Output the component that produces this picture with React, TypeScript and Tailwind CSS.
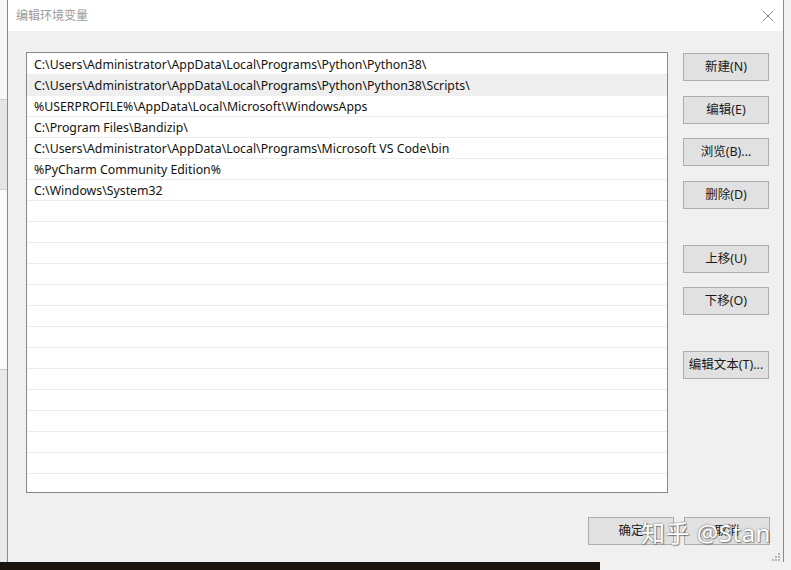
import React from "react"

const paths = [
  "C:\\Users\\Administrator\\AppData\\Local\\Programs\\Python\\Python38\\",
  "C:\\Users\\Administrator\\AppData\\Local\\Programs\\Python\\Python38\\Scripts\\",
  "%USERPROFILE%\\AppData\\Local\\Microsoft\\WindowsApps",
  "C:\\Program Files\\Bandizip\\",
  "C:\\Users\\Administrator\\AppData\\Local\\Programs\\Microsoft VS Code\\bin",
  "%PyCharm Community Edition%",
  "C:\\Windows\\System32",
]

const rows = [...paths, ...Array(14).fill("")]

const font = { fontFamily: "'Noto Sans', 'Noto Sans CJK SC', sans-serif" }

function Btn({ label, className = "" }: { label: string; className?: string }) {
  return (
    <button
      className={`h-[28px] w-[86px] shrink-0 border border-[#adadad] bg-[#e1e1e1] text-[12.5px] text-[#1a1a1a] leading-none ${className}`}
    >
      {label}
    </button>
  )
}

export default function App() {
  return (
    <div className="relative w-[791px] h-[570px] overflow-hidden bg-[#f4f4f4]" style={font}>
      <div className="flex h-[562px]">
        {/* fenêtre derrière, à gauche */}
        <div className="w-[7px] shrink-0 flex flex-col">
          <div className="h-[100px] bg-[#f7f7f7] border-b border-[#cfcfcf]" />
          <div className="h-[90px] bg-[#e6e6e6] border-b border-[#d0d0d0]" />
          <div className="h-[180px] bg-[#fafafa] border-b border-[#c8c8c8]" />
          <div className="flex-1 bg-[#e9e9e9]" />
        </div>

        {/* dialogue */}
        <div className="w-[777px] shrink-0 flex flex-col border-x border-[#8a8a8a] bg-[#f0f0f0]">
          <div className="h-[31px] shrink-0 bg-white flex items-center justify-between pl-[8px] pr-[9px]">
            <span className="text-[12px] text-[#9a9a9a]">编辑环境变量</span>
            <svg width="12" height="12" viewBox="0 0 12 12" className="text-[#888]">
              <path d="M1 1L11 11M11 1L1 11" stroke="currentColor" strokeWidth="1" />
            </svg>
          </div>

          <div className="flex-1 flex flex-col pt-[21px] pl-[18px] pr-[13px]">
            <div className="flex gap-[15px]">
              <div className="w-[642px] h-[441px] shrink-0 border border-[#828790] bg-white pt-[1px] overflow-hidden">
                {rows.map((p, i) => (
                  <div
                    key={i}
                    className={`h-[21px] flex items-center pl-[7px] pt-[2px] text-[12.3px] text-[#111] whitespace-nowrap ${
                      i === 1 ? "bg-[#efefef]" : "border-b border-[#ececec]"
                    }`}
                  >
                    {p}
                  </div>
                ))}
              </div>

              <div className="flex flex-col pt-[1px]">
                <Btn label="新建(N)" />
                <Btn label="编辑(E)" className="mt-[15px]" />
                <Btn label="浏览(B)..." className="mt-[14px]" />
                <Btn label="删除(D)" className="mt-[15px]" />
                <Btn label="上移(U)" className="mt-[36px]" />
                <Btn label="下移(O)" className="mt-[14px]" />
                <Btn label="编辑文本(T)..." className="mt-[36px]" />
              </div>
            </div>

            <div className="flex justify-end gap-[10px] mt-[24px]">
              <Btn label="确定" className="w-[85px]" />
              <Btn label="取消" className="w-[86px]" />
            </div>

            <div className="flex justify-end mt-[8px] -mr-[10px]">
              <svg width="8" height="8" viewBox="0 0 8 8" fill="#b5b5b5">
                <rect x="6" y="0" width="2" height="2" />
                <rect x="3" y="3" width="2" height="2" />
                <rect x="6" y="3" width="2" height="2" />
                <rect x="0" y="6" width="2" height="2" />
                <rect x="3" y="6" width="2" height="2" />
                <rect x="6" y="6" width="2" height="2" />
              </svg>
            </div>
          </div>
        </div>

        <div className="flex-1 bg-[#f3f3f3]" />
      </div>

      {/* bureau en bas */}
      <div className="flex h-[8px]">
        <div className="w-[600px] bg-[#1a1410]" />
        <div className="flex-1 bg-[#f2f2f2]" />
      </div>

      {/* filigrane */}
      <div
        className="absolute left-[641px] top-[521px] text-[24px] leading-none text-white tracking-[0.5px]"
        style={{ textShadow: "0 0 2px rgba(0,0,0,0.55), 1px 1px 1px rgba(70,70,70,0.5)" }}
      >
        知乎 @Stan
      </div>
    </div>
  )
}
